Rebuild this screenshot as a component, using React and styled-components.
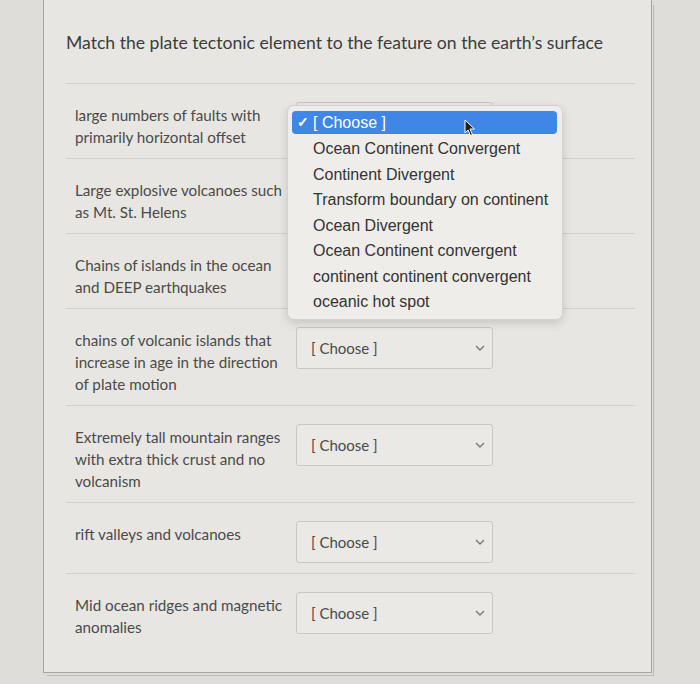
import React from "react";
import styled, { createGlobalStyle } from "styled-components";

const Global = createGlobalStyle`
  html, body { margin: 0; padding: 0; background: #dfddd9; }
  body { font-family: Lato, "Open Sans", sans-serif; width: 700px; height: 684px; overflow: hidden; }
`;

const Card = styled.div`
  margin-left: 43px;
  width: 609px;
  box-sizing: border-box;
  background: #e8e6e2;
  border: 1px solid #a8a6a2;
  border-top: none;
  padding: 31px 16px 24px 22px;
  box-shadow: 2px 3px 0 -1px #dfddd9, 3px 4px 0 -1px #bbb9b5;
`;

const Title = styled.h2`
  margin: 0;
  font-family: Lato, sans-serif;
  font-weight: 400;
  font-size: 17.6px;
  line-height: 24px;
  color: #3c3c3c;
  padding-bottom: 28px;
  border-bottom: 1px solid #d2d0cc;
`;

const Row = styled.div`
  display: grid;
  grid-template-columns: 216px 197px;
  column-gap: 5px;
  align-items: start;
  padding: 18px 0 10px 9px;
  border-bottom: ${(p) => (p.$last ? "none" : "1px solid #d2d0cc")};
`;

const Label = styled.div`
  padding-top: 2px;
  font-size: 15.2px;
  line-height: 22px;
  color: #4a4a4a;
`;

const SelectWrap = styled.div`
  position: relative;
`;

const SelectBox = styled.div`
  box-sizing: border-box;
  height: 42px;
  border: 1px solid #c9c7c3;
  border-radius: 3px;
  background: #ebe9e5;
  display: flex;
  align-items: center;
  justify-content: space-between;
  padding: 0 6px 0 14px;
  font-size: 15px;
  color: #4a4a4a;
`;

const Chevron = styled.svg`
  width: 12px;
  height: 12px;
  color: #777;
`;

const Menu = styled.div`
  position: absolute;
  top: 3px;
  left: -9px;
  width: 276px;
  box-sizing: border-box;
  padding: 5px 5px 4px 4px;
  background: #efedea;
  border: 1px solid #d4d2ce;
  border-radius: 7px;
  box-shadow: 0 3px 10px rgba(0, 0, 0, 0.14);
  z-index: 5;
  font-family: "Liberation Sans", Arial, sans-serif;
`;

const Item = styled.div`
  position: relative;
  height: ${(p) => (p.$active ? "23px" : "25.5px")};
  margin-bottom: ${(p) => (p.$active ? "2px" : "0")};
  line-height: ${(p) => (p.$active ? "23px" : "25.5px")};
  padding-left: 21px;
  font-size: 16px;
  border-radius: 4px;
  color: ${(p) => (p.$active ? "#ffffff" : "#333333")};
  background: ${(p) => (p.$active ? "#3f86e6" : "transparent")};
`;

const Check = styled.span`
  position: absolute;
  left: 5px;
  top: 0;
  font-size: 14px;
  font-weight: 700;
`;

const Cursor = styled.svg`
  position: absolute;
  left: 172px;
  top: 8px;
  width: 12px;
  height: 18px;
`;

const options = [
  "Ocean Continent Convergent",
  "Continent Divergent",
  "Transform boundary on continent",
  "Ocean Divergent",
  "Ocean Continent convergent",
  "continent continent convergent",
  "oceanic hot spot",
];

const rows = [
  ["large numbers of faults with", "primarily horizontal offset"],
  ["Large explosive volcanoes such", "as Mt. St. Helens"],
  ["Chains of islands in the ocean", "and DEEP earthquakes"],
  ["chains of volcanic islands that", "increase in age in the direction", "of plate motion"],
  ["Extremely tall mountain ranges", "with extra thick crust and no", "volcanism"],
  ["rift valleys and volcanoes"],
  ["Mid ocean ridges and magnetic", "anomalies"],
];

function Select({ open }) {
  return (
    <SelectWrap>
      <SelectBox>
        <span>[ Choose ]</span>
        <Chevron viewBox="0 0 12 12" fill="none" stroke="currentColor" strokeWidth="1.4">
          <path d="M2 4 L6 8 L10 4" />
        </Chevron>
      </SelectBox>
      {open && (
        <Menu>
          <Item $active>
            <Check>✓</Check>[ Choose ]
            <Cursor viewBox="0 0 12 18">
              <path d="M1 1 L1 14 L4 11 L6.5 16.5 L8.5 15.5 L6 10 L10.5 10 Z" fill="#222" stroke="#fff" strokeWidth="1" />
            </Cursor>
          </Item>
          {options.map((o) => (
            <Item key={o}>{o}</Item>
          ))}
        </Menu>
      )}
    </SelectWrap>
  );
}

export default function App() {
  return (
    <>
      <Global />
      <Card>
        <Title>Match the plate tectonic element to the feature on the earth’s surface</Title>
        {rows.map((lines, i) => (
          <Row key={i} $last={i === rows.length - 1}>
            <Label>
              {lines.map((l, j) => (
                <React.Fragment key={j}>
                  {l}
                  {j < lines.length - 1 && <br />}
                </React.Fragment>
              ))}
            </Label>
            <Select open={i === 0} />
          </Row>
        ))}
      </Card>
    </>
  );
}
